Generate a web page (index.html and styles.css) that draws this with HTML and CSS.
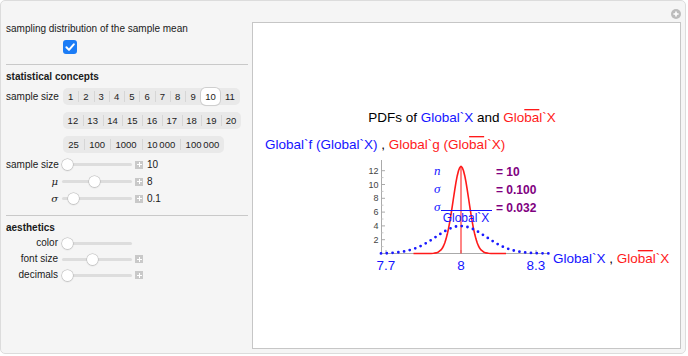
FILE: index.html
```html
<!DOCTYPE html>
<html>
<head>
<meta charset="utf-8">
<link rel="stylesheet" href="styles.css">
</head>
<body>
<div class="app">
  <span class="corner-plus"><svg viewBox="0 0 10 10" width="10" height="10"><circle cx="5" cy="5" r="5" fill="#bcbcbc"/><path d="M5 2.4V7.6M2.4 5H7.6" stroke="#fff" stroke-width="1.6"/></svg></span>
  <div class="controls">
    <div class="title">sampling distribution of the sample mean</div>
    <div class="check"><svg viewBox="0 0 14 14" width="14" height="14"><rect width="14" height="14" rx="3" fill="#1b7cf6"/><path d="M3.4 7.3 L6 9.9 L10.8 4.3" fill="none" stroke="#fff" stroke-width="2" stroke-linecap="round" stroke-linejoin="round"/></svg></div>
    <div class="rule"></div>
    <div class="section">statistical concepts</div>
    <div class="grid">
      <div class="lbl lbl-top">sample size</div>
      <div class="seg-rows">
        <div class="seg"><span>1</span><span>2</span><span>3</span><span>4</span><span>5</span><span>6</span><span>7</span><span>8</span><span>9</span><span class="on">10</span><span>11</span></div>
        <div class="seg"><span>12</span><span>13</span><span>14</span><span>15</span><span>16</span><span>17</span><span>18</span><span>19</span><span>20</span></div>
        <div class="seg wide"><span>25</span><span>100</span><span>1000</span><span>10&#8201;000</span><span>100&#8201;000</span></div>
      </div>
      <div class="lbl">sample size</div>
      <div class="slider"><div class="track"><i class="thumb" style="left:0px"></i></div><b class="plus"></b><span class="val">10</span></div>
      <div class="lbl greek">μ</div>
      <div class="slider"><div class="track"><i class="thumb" style="left:27px"></i></div><b class="plus"></b><span class="val">8</span></div>
      <div class="lbl greek">σ</div>
      <div class="slider"><div class="track"><i class="thumb" style="left:6px"></i></div><b class="plus"></b><span class="val">0.1</span></div>
    </div>
    <div class="rule rule2"></div>
    <div class="section sec2">aesthetics</div>
    <div class="grid grid2">
      <div class="lbl">color</div>
      <div class="slider"><div class="track"><i class="thumb" style="left:0px"></i></div></div>
      <div class="lbl">font size</div>
      <div class="slider"><div class="track"><i class="thumb" style="left:25px"></i></div><b class="plus"></b></div>
      <div class="lbl">decimals</div>
      <div class="slider"><div class="track"><i class="thumb" style="left:0px"></i></div><b class="plus"></b></div>
    </div>
  </div>
  <div class="plot">
    <svg class="graph" viewBox="253 23 427 325" width="427" height="325">
      <text class="t-title" x="462" y="122" text-anchor="middle"><tspan fill="#000">PDFs of </tspan><tspan fill="#1414ff">Global`X</tspan><tspan fill="#000"> and </tspan><tspan fill="#ff1a1a">Glo<tspan class="ovl">ba</tspan>l`X</tspan></text>
      <text class="t-title" x="265" y="149"><tspan fill="#1414ff">Global`f (Global`X)</tspan><tspan fill="#000"> , </tspan><tspan fill="#ff1a1a">Global`g (Glo<tspan class="ovl">ba</tspan>l`X)</tspan></text>

      <g stroke="#aaaaaa" stroke-width="1" fill="none">
        <line x1="381.5" y1="160" x2="381.5" y2="254"/>
        <line x1="381" y1="253.5" x2="549" y2="253.5"/>
        <path d="M381.5 170.7h3.5M381.5 184.5h3.5M381.5 198.3h3.5M381.5 212.1h3.5M381.5 225.9h3.5M381.5 239.7h3.5"/>
        <path d="M381.5 177.6h2M381.5 191.4h2M381.5 205.2h2M381.5 219h2M381.5 232.8h2M381.5 246.6h2" stroke="#c8c8c8"/>
        <path d="M386 253.5v-3.5M461 253.5v-3.5M536 253.5v-3.5"/>
      </g>
      <g class="ylab" text-anchor="end">
        <text x="378.5" y="173.7">12</text>
        <text x="378.5" y="187.5">10</text>
        <text x="378.5" y="201.3">8</text>
        <text x="378.5" y="215.1">6</text>
        <text x="378.5" y="228.9">4</text>
        <text x="378.5" y="242.7">2</text>
      </g>

      <g transform="translate(1,0)">
        <line x1="460" y1="253.5" x2="460" y2="167" stroke="#ff2020" stroke-opacity="0.55" stroke-width="2"/>
        <polyline fill="none" stroke="#ff1a1a" stroke-width="1.6" stroke-linejoin="round" points="412.5,253.5 422.5,253.5 430,253.45 432.5,253.3 435,252.9 437.5,251.98 440,249.95 441.25,248.3 442.5,246 443.75,243 445,239.1 446.25,234.3 447.5,228.55 448.75,221.9 450,214.4 451.25,206.3 452.5,198 453.75,189.8 455,182.2 456.25,175.7 457.5,170.7 458.75,167.5 460,166.4 461.25,167.5 462.5,170.7 463.75,175.7 465,182.2 466.25,189.8 467.5,198 468.75,206.3 470,214.4 471.25,221.9 472.5,228.55 473.75,234.3 475,239.1 476.25,243 477.5,246 478.75,248.3 480,249.95 482.5,251.98 485,252.9 487.5,253.3 490,253.45 497.5,253.5 505,253.5"/>
        <polyline fill="none" stroke="#1a1aff" stroke-width="2.8" stroke-linecap="round" stroke-dasharray="0 5.8" points="380,253.4 385,253.3 390,252.95 395,252.56 400,251.95 405,251.05 410,249.77 415,248.05 420,245.85 425,243.17 430,240.1 435,236.8 440,233.51 445,230.51 450,228.09 455,226.52 460,225.98 465,226.52 470,228.09 475,230.51 480,233.51 485,236.8 490,240.1 495,243.17 500,245.85 505,248.05 510,249.77 515,251.05 520,251.95 525,252.56 530,252.95 535,253.2 540,253.33 545,253.45 548,253.47"/>
      </g>

      <g class="xlab" text-anchor="middle">
        <text x="386" y="270">7.7</text>
        <text x="461" y="270">8</text>
        <text x="536" y="270">8.3</text>
      </g>

      <g class="ann">
        <text class="it" x="434" y="175">n</text>
        <text class="it" x="434" y="193">σ</text>
        <text class="it" x="434" y="211">σ</text>
        <line x1="441" y1="210.5" x2="492" y2="210.5" stroke="#1414ff" stroke-width="1"/>
        <text class="sub" x="466" y="222" text-anchor="middle">Global`X</text>
        <text class="num" x="496" y="176">= 10</text>
        <text class="num" x="496" y="194">= 0.100</text>
        <text class="num" x="496" y="212">= 0.032</text>
      </g>

      <text class="t-title" x="553" y="263"><tspan fill="#1414ff">Global`X</tspan><tspan fill="#000"> , </tspan><tspan fill="#ff1a1a">Glo<tspan class="ovl">ba</tspan>l`X</tspan></text>
    </svg>
  </div>
</div>
</body>
</html>
```

FILE: styles.css
```css
* { box-sizing: border-box; }

body {
  margin: 0;
  background: #ffffff;
  font-family: "Liberation Sans", Arial, sans-serif;
}

.app {
  position: relative;
  width: 686px;
  height: 354px;
  border: 1px solid #dcdcdc;
  border-radius: 5px;
  background: #f5f5f5;
  display: flex;
  padding: 21px 4px 4px 0;
}

.corner-plus {
  position: absolute;
  top: 8px;
  left: 670px;
  width: 10px;
  height: 10px;
  line-height: 0;
}

.controls {
  width: 251px;
  flex: none;
  padding: 0 4px 0 5px;
  font-size: 10px;
  color: #1a1a1a;
}

.title {
  height: 14px;
  line-height: 14px;
}

.check {
  margin: 4px 0 0 57px;
  width: 14px;
  height: 14px;
  line-height: 0;
}

.rule {
  height: 1px;
  background: #c9c9c9;
  margin-top: 10px;
}

.rule2 {
  margin-top: 8px;
}

.section {
  margin-top: 5px;
  height: 14px;
  line-height: 14px;
  font-weight: bold;
}

.grid {
  display: grid;
  grid-template-columns: 52px 1fr;
  column-gap: 4px;
  margin-top: 4px;
}

.lbl {
  text-align: right;
  height: 17px;
  line-height: 17px;
  white-space: nowrap;
}

.lbl-top {
  align-self: start;
}

.greek {
  font-style: italic;
  font-family: "DejaVu Serif", "Liberation Serif", serif;
  font-size: 10px;
}

.seg-rows {
  display: flex;
  flex-direction: column;
  align-items: flex-start;
  gap: 7px;
  margin-left: 1px;
  margin-bottom: 3px;
}

.seg {
  display: inline-flex;
  height: 17px;
  background: #e9e9e9;
  border-radius: 5px;
  font-size: 9.5px;
  color: #222;
}

.seg span {
  position: relative;
  display: flex;
  align-items: center;
  justify-content: center;
  min-width: 15.3px;
  padding: 0 4.6px;
  height: 17px;
}

.seg span + span::before {
  content: "";
  position: absolute;
  left: 0;
  top: 3px;
  bottom: 3px;
  width: 1px;
  background: #d6d6d6;
}

.seg span.on {
  background: #ffffff;
  border-radius: 5px;
  box-shadow: 0 0 0 1px #cfcfcf, 0 1px 1px rgba(0, 0, 0, 0.12);
}

.seg span.on::before,
.seg span.on + span::before {
  display: none;
}

.seg.wide span {
  padding: 0 5.2px;
}

.slider {
  display: flex;
  align-items: center;
  height: 17px;
}

.track {
  position: relative;
  width: 70px;
  height: 3px;
  border-radius: 2px;
  background: #dddddd;
}

.thumb {
  position: absolute;
  top: -4px;
  width: 11px;
  height: 11px;
  border-radius: 50%;
  background: #ffffff;
  box-shadow: 0 0 0 0.5px #bdbdbd, 0 0.5px 1.5px rgba(0, 0, 0, 0.3);
}

.plus {
  position: relative;
  width: 8px;
  height: 8px;
  margin-left: 3px;
  background: #c9c9c9;
}

.plus::before,
.plus::after {
  content: "";
  position: absolute;
  background: #ffffff;
}

.plus::before {
  left: 1.5px;
  right: 1.5px;
  top: 3.5px;
  height: 1px;
}

.plus::after {
  top: 1.5px;
  bottom: 1.5px;
  left: 3.5px;
  width: 1px;
}

.val {
  margin-left: 4px;
}

.sec2 {
  margin-top: 5px;
}

.grid2 {
  margin-top: 0;
}

.grid2 .lbl,
.grid2 .slider {
  height: 16px;
  line-height: 16px;
}

.plot {
  width: 429px;
  height: 327px;
  flex: none;
  border: 1px solid #c6c6c6;
  background: #ffffff;
}

.graph {
  display: block;
}

.t-title {
  font-family: "Liberation Sans", Arial, sans-serif;
  font-size: 13.5px;
}

.ovl {
  text-decoration: overline;
}

.ylab {
  font-family: "Liberation Sans", Arial, sans-serif;
  font-size: 9px;
  fill: #444444;
}

.xlab {
  font-family: "Liberation Sans", Arial, sans-serif;
  font-size: 13.5px;
  fill: #1414ff;
}

.ann .it {
  font-family: "Liberation Serif", serif;
  font-style: italic;
  font-size: 13px;
  fill: #1414ff;
}

.ann .sub {
  font-family: "Liberation Sans", Arial, sans-serif;
  font-size: 12px;
  fill: #1414ff;
}

.ann .num {
  font-family: "Liberation Sans", Arial, sans-serif;
  font-weight: bold;
  font-size: 12px;
  fill: #800080;
}
```
